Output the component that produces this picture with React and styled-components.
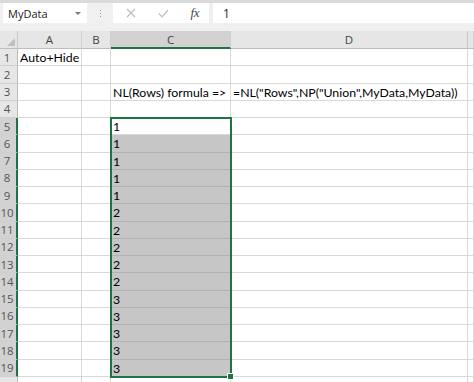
import React from 'react';
import styled, { createGlobalStyle, css } from 'styled-components';

const GREEN = '#217346';
const GRID = '#d9d9d9';
const ROW_H = 17.26;
const HEAD_H = 18;
const COL_W = [18, 64, 29, 120, 237];

const GlobalStyle = createGlobalStyle`
  html, body { margin: 0; padding: 0; background: #fff; overflow: hidden; }
  body { font-family: Lato, "Liberation Sans", sans-serif; color: #000; }
  #root { width: 474px; height: 382px; overflow: hidden; }
`;

const Page = styled.div`
  width: 474px;
  height: 382px;
  display: flex;
  flex-direction: column;
  overflow: hidden;
`;

const FormulaBar = styled.div`
  height: 31px;
  box-sizing: border-box;
  background: #f0f0f0;
  border-top: 3px solid #dadada;
  display: flex;
  align-items: flex-start;
  padding-left: 3px;
  flex-shrink: 0;
`;

const NameBox = styled.div`
  width: 84px;
  height: 20px;
  background: #fff;
  display: flex;
  align-items: center;
  justify-content: space-between;
  box-sizing: border-box;
  padding: 0 6px 0 5px;
  font-family: "Open Sans", "Noto Sans", sans-serif;
  font-size: 11px;
  color: #222;
`;

const Caret = styled.span`
  width: 0;
  height: 0;
  border-left: 3px solid transparent;
  border-right: 3px solid transparent;
  border-top: 3px solid #7a7a7a;
`;

const Grip = styled.div`
  width: 26px;
  height: 20px;
  display: flex;
  flex-direction: column;
  align-items: center;
  justify-content: center;
  gap: 2px;
`;

const GripDot = styled.span`
  width: 1px;
  height: 1px;
  background: #9a9a9a;
`;

const FxBox = styled.div`
  width: 96px;
  height: 20px;
  background: #fff;
  display: flex;
  align-items: center;
  justify-content: space-between;
  box-sizing: border-box;
  padding: 0 10px 0 13px;
`;

const FxLabel = styled.span`
  font-family: "Liberation Serif", serif;
  font-style: italic;
  font-size: 13px;
  color: #444;
  letter-spacing: -0.5px;
`;

const ValueBox = styled.div`
  flex: 1;
  height: 20px;
  margin-left: 4px;
  background: #fff;
  display: flex;
  align-items: center;
  padding-left: 10px;
  font-family: "Open Sans", "Noto Sans", sans-serif;
  font-size: 12px;
  color: #222;
`;

const Sheet = styled.div`
  position: relative;
  display: grid;
  grid-template-columns: ${COL_W.map((w) => w + 'px').join(' ')} 1fr;
  grid-template-rows: ${HEAD_H}px repeat(20, ${ROW_H}px);
  flex: 1;
`;

const Corner = styled.div`
  background: #e6e6e6;
  border-right: 1px solid #c8c8c8;
  border-bottom: 1px solid #bdbdbd;
  position: relative;
  &::after {
    content: '';
    position: absolute;
    right: 2px;
    bottom: 2px;
    width: 0;
    height: 0;
    border-left: 8px solid transparent;
    border-bottom: 8px solid #bfbfbf;
  }
`;

const ColHead = styled.div`
  background: ${(p) => (p.$active ? '#d2d2d2' : '#e6e6e6')};
  border-right: 1px solid ${(p) => (p.$last ? '#c8c8c8' : '#d0d0d0')};
  border-bottom: ${(p) => (p.$active ? `2px solid ${GREEN}` : '1px solid #bdbdbd')};
  box-sizing: border-box;
  display: flex;
  align-items: center;
  justify-content: center;
  font-family: "Open Sans", "Noto Sans", sans-serif;
  font-size: 11.5px;
  color: #444;
  padding-top: ${(p) => (p.$active ? '1px' : '0')};
`;

const RowHead = styled.div`
  background: ${(p) => (p.$active ? '#d2d2d2' : '#e6e6e6')};
  border-bottom: 1px solid #cfcfcf;
  border-right: ${(p) => (p.$active ? `2px solid ${GREEN}` : '1px solid #bdbdbd')};
  box-sizing: border-box;
  display: flex;
  align-items: center;
  justify-content: center;
  padding-right: ${(p) => (p.$active ? '2px' : '3px')};
  font-family: "Open Sans", "Noto Sans", sans-serif;
  font-size: 11.5px;
  color: #555;
  overflow: hidden;
`;

const Cell = styled.div`
  box-sizing: border-box;
  border-right: 1px solid ${GRID};
  border-bottom: 1px solid ${GRID};
  display: flex;
  align-items: center;
  padding: 1px 2px 0 2px;
  font-size: 12.3px;
  white-space: nowrap;
  overflow: visible;
  ${(p) =>
    p.$shaded &&
    css`
      background: #c6c6c6;
      border-bottom-color: #b2b2b2;
    `}
`;

const Selection = styled.div`
  position: absolute;
  left: ${COL_W[0] + COL_W[1] + COL_W[2] - 1}px;
  width: ${COL_W[3] + 2}px;
  top: ${HEAD_H + 4 * ROW_H - 1}px;
  height: ${15 * ROW_H + 2}px;
  box-sizing: border-box;
  border: 2px solid ${GREEN};
  pointer-events: none;
`;

const FillHandle = styled.span`
  position: absolute;
  right: -4px;
  bottom: -4px;
  width: 5px;
  height: 5px;
  background: ${GREEN};
  border: 1px solid #fff;
`;

const XIcon = () => (
  <svg width="10" height="10" viewBox="0 0 10 10">
    <path d="M1 1 L9 9 M9 1 L1 9" stroke="#bdbdbd" strokeWidth="1.2" fill="none" />
  </svg>
);

const CheckIcon = () => (
  <svg width="11" height="9" viewBox="0 0 11 9">
    <path d="M1 4.5 L4 7.8 L10 1" stroke="#bdbdbd" strokeWidth="1.2" fill="none" />
  </svg>
);

const cellData = {
  1: { A: 'Auto+Hide' },
  3: { C: 'NL(Rows) formula =>', D: '=NL("Rows",NP("Union",MyData,MyData))' },
  5: { C: '1' },
  6: { C: '1' },
  7: { C: '1' },
  8: { C: '1' },
  9: { C: '1' },
  10: { C: '2' },
  11: { C: '2' },
  12: { C: '2' },
  13: { C: '2' },
  14: { C: '2' },
  15: { C: '3' },
  16: { C: '3' },
  17: { C: '3' },
  18: { C: '3' },
  19: { C: '3' },
};

const cols = ['A', 'B', 'C', 'D', 'E'];
const rows = Array.from({ length: 20 }, (_, i) => i + 1);

export default function App() {
  return (
    <Page>
      <GlobalStyle />
      <FormulaBar>
        <NameBox>
          MyData
          <Caret />
        </NameBox>
        <Grip>
          <GripDot />
          <GripDot />
          <GripDot />
        </Grip>
        <FxBox>
          <XIcon />
          <CheckIcon />
          <FxLabel>fx</FxLabel>
        </FxBox>
        <ValueBox>1</ValueBox>
      </FormulaBar>
      <Sheet>
        <Corner />
        {cols.map((c) => (
          <ColHead key={c} $active={c === 'C'} $last={c === 'D'}>
            {c === 'E' ? '' : c}
          </ColHead>
        ))}
        {rows.map((r) => (
          <React.Fragment key={r}>
            <RowHead $active={r >= 5 && r <= 19}>{r <= 19 ? r : ''}</RowHead>
            {cols.map((c) => (
              <Cell key={c} $shaded={c === 'C' && r >= 6 && r <= 19}>
                {(cellData[r] && cellData[r][c]) || ''}
              </Cell>
            ))}
          </React.Fragment>
        ))}
        <Selection>
          <FillHandle />
        </Selection>
      </Sheet>
    </Page>
  );
}
